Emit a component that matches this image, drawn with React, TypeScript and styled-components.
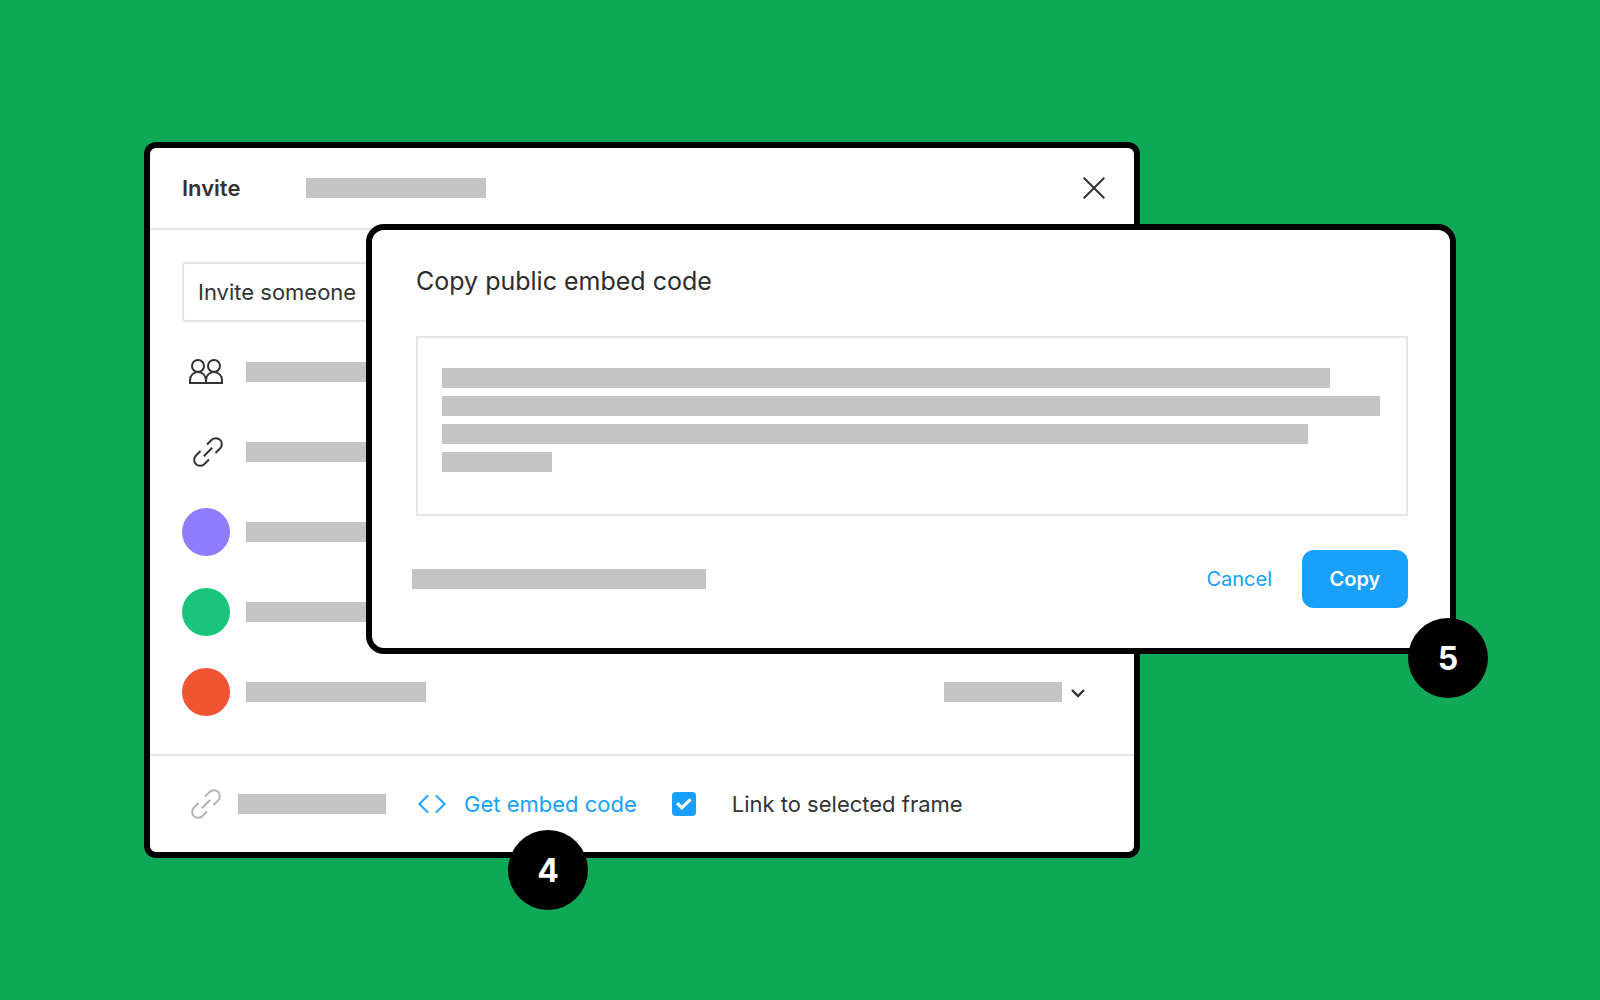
import React from "react";
import styled, { createGlobalStyle } from "styled-components";

const GlobalStyle = createGlobalStyle`
  *, *::before, *::after { box-sizing: border-box; }
  body { margin: 0; background: #0fa958; }
  body, button, input { font-family: Inter, "Liberation Sans", sans-serif; }
`;

const Stage = styled.main`
  min-height: 100vh;
  padding: 48px 144px;
  display: flex;
  align-items: center;
  color: #333;
  font-size: 22px;
  line-height: 28px;
`;

const Scene = styled.div`
  position: relative;
  flex: 1;
`;

const InviteWindow = styled.section`
  position: relative;
  margin-right: 316px;
  background: #fff;
  border: 6px solid #000;
  border-radius: 12px;
`;

const Header = styled.header`
  display: flex;
  align-items: center;
  height: 82px;
  padding: 0 24px 0 32px;
  border-bottom: 2px solid #e5e5e5;
`;

const Heading = styled.h1`
  margin: 0;
  width: 124px;
  font-size: 22px;
  line-height: 28px;
  font-weight: 600;
`;

const IconButton = styled.button`
  display: grid;
  place-items: center;
  padding: 0;
  border: 0;
  background: none;
  color: #333;
  cursor: pointer;
`;

const CloseButton = styled(IconButton)`
  width: 32px;
  height: 32px;
  margin-left: auto;
`;

const Bar = styled.span<{ $width: number }>`
  display: block;
  flex: none;
  width: ${(p) => p.$width}px;
  max-width: 100%;
  height: 20px;
  background: #c4c4c4;
`;

const Body = styled.div`
  padding: 32px 32px 22px;
`;

const InviteInput = styled.input`
  display: block;
  width: 100%;
  height: 60px;
  padding: 0 14px;
  border: 2px solid #e5e5e5;
  border-radius: 4px;
  outline: 0;
  font-size: 22px;
  line-height: 28px;
  color: #333;
  &::placeholder { color: #333; opacity: 1; }
`;

const People = styled.ul`
  margin: 10px 0 0;
  padding: 0;
  list-style: none;
`;

const Person = styled.li`
  display: flex;
  align-items: center;
  gap: 16px;
  height: 80px;
`;

const Avatar = styled.span<{ $color?: string }>`
  display: grid;
  place-items: center;
  width: 48px;
  height: 48px;
  border-radius: 50%;
  background: ${(p) => p.$color ?? "transparent"};
`;

const Role = styled.div`
  display: flex;
  align-items: center;
  gap: 4px;
  margin-left: auto;
  margin-right: 12px;
`;

const RoleButton = styled(IconButton)`
  width: 24px;
  height: 24px;
`;

const Footer = styled.footer`
  display: flex;
  align-items: center;
  height: 98px;
  padding: 0 32px;
  border-top: 2px solid #e5e5e5;
`;

const CopyLink = styled.div`
  display: flex;
  align-items: center;
  color: #b3b3b3;
  gap: 8px;
`;

const EmbedButton = styled.button`
  display: flex;
  align-items: center;
  gap: 16px;
  margin-left: 30px;
  padding: 0;
  border: 0;
  background: none;
  color: #18a0fb;
  font-size: 22px;
  line-height: 28px;
  white-space: nowrap;
  cursor: pointer;
`;

const FrameOption = styled.label`
  display: flex;
  align-items: center;
  gap: 36px;
  margin-left: 35px;
  white-space: nowrap;
`;

const CheckWrap = styled.span`
  display: grid;
  place-items: center;
  width: 24px;
  height: 24px;
  & > * { grid-area: 1 / 1; }
  svg { pointer-events: none; visibility: hidden; }
  input:checked + svg { visibility: visible; }
`;

const Checkbox = styled.input`
  appearance: none;
  width: 24px;
  height: 24px;
  margin: 0;
  border: 2px solid #18a0fb;
  border-radius: 4px;
  &:checked { background: #18a0fb; }
`;

const Dialog = styled.section`
  position: absolute;
  top: 82px;
  left: 222px;
  right: 0;
  padding: 35px 42px 40px 44px;
  background: #fff;
  border: 6px solid #000;
  border-radius: 18px;
`;

const DialogTitle = styled.h2`
  margin: 0 0 39px;
  font-size: 25px;
  line-height: 32px;
  font-weight: 400;
  color: #2c2c2c;
`;

const CodeBox = styled.div`
  display: flex;
  flex-direction: column;
  gap: 8px;
  height: 180px;
  padding: 30px 24px;
  border: 2px solid #e5e5e5;
`;

const Actions = styled.div`
  display: flex;
  align-items: center;
  gap: 30px;
  margin: 34px 0 0 -4px;
`;

const Button = styled.button<{ $primary?: boolean }>`
  height: 58px;
  width: ${(p) => (p.$primary ? "106px" : "auto")};
  padding: 0;
  margin-left: ${(p) => (p.$primary ? "0" : "auto")};
  border: 0;
  border-radius: 12px;
  background: ${(p) => (p.$primary ? "#18a0fb" : "transparent")};
  color: ${(p) => (p.$primary ? "#fff" : "#18a0fb")};
  font-size: 20px;
  line-height: 28px;
  font-weight: ${(p) => (p.$primary ? 600 : 400)};
  cursor: pointer;
`;

const Step = styled.span<{ $left?: number; $right?: number; $bottom: number }>`
  position: absolute;
  bottom: ${(p) => p.$bottom}px;
  ${(p) => (p.$left !== undefined ? `left: ${p.$left}px;` : `right: ${p.$right}px;`)}
  display: grid;
  place-items: center;
  width: 80px;
  height: 80px;
  padding-top: 2px;
  border-radius: 50%;
  background: #000;
  color: #fff;
  font-size: 32px;
  line-height: 40px;
  font-weight: 700;
`;

const LinkIcon = ({ viewBox = "-2 0 36 32" }: { viewBox?: string }) => (
  <svg width="36" height="32" viewBox={viewBox} fill="none" stroke="currentColor" strokeWidth="2" aria-hidden="true">
    <path d="M15 8.5 19.76 3.76a6 6 0 0 1 8.48 8.48L23.5 17" />
    <path d="M8.5 15 3.76 19.76a6 6 0 0 0 8.48 8.48L17 23.5" />
    <path d="m11.8 20.2 8.4-8.4" />
  </svg>
);

const GroupIcon = () => (
  <svg width="36" height="28" viewBox="0 0 36 28" fill="none" stroke="currentColor" strokeWidth="2" aria-hidden="true">
    <circle cx="10" cy="8" r="6" />
    <circle cx="26" cy="8" r="6" />
    <path d="M2 25v-3a8 8 0 0 1 16 0v3zM18 25v-3a8 8 0 0 1 16 0v3z" />
  </svg>
);

const people: { id: string; color?: string; icon?: React.ReactNode; role?: boolean }[] = [
  { id: "group", icon: <GroupIcon /> },
  { id: "link", icon: <LinkIcon viewBox="-4 0 36 32" /> },
  { id: "violet", color: "#907cff" },
  { id: "green", color: "#1bc47d" },
  { id: "red", color: "#f05533", role: true },
];

const codeLines = [888, 938, 866, 110];

export default function App() {
  return (
    <>
      <GlobalStyle />
      <Stage>
        <Scene>
          <InviteWindow>
            <Header>
              <Heading>Invite</Heading>
              <Bar $width={180} />
              <CloseButton aria-label="Close">
                <svg width="24" height="24" viewBox="0 0 24 24" fill="none" stroke="currentColor" strokeWidth="2" aria-hidden="true">
                  <path d="m1.7 1.7 20.6 20.6M22.3 1.7 1.7 22.3" />
                </svg>
              </CloseButton>
            </Header>
            <Body>
              <InviteInput aria-label="Invite someone" placeholder="Invite someone" />
              <People>
                {people.map((p) => (
                  <Person key={p.id}>
                    <Avatar $color={p.color}>{p.icon}</Avatar>
                    <Bar $width={180} />
                    {p.role && (
                      <Role>
                        <Bar $width={118} />
                        <RoleButton aria-label="Change role">
                          <svg width="16" height="16" viewBox="0 0 16 16" fill="none" stroke="currentColor" strokeWidth="2.4" aria-hidden="true">
                            <path d="m2 6 6 6 6-6" />
                          </svg>
                        </RoleButton>
                      </Role>
                    )}
                  </Person>
                ))}
              </People>
            </Body>
            <Footer>
              <CopyLink>
                <Avatar><LinkIcon /></Avatar>
                <Bar $width={148} />
              </CopyLink>
              <EmbedButton>
                <svg width="32" height="24" viewBox="0 0 32 24" fill="none" stroke="currentColor" strokeWidth="2" aria-hidden="true">
                  <path d="m12 3.4-8.6 8.6 8.6 8.6M20 3.4l8.6 8.6-8.6 8.6" />
                </svg>
                Get embed code
              </EmbedButton>
              <FrameOption>
                <CheckWrap>
                  <Checkbox type="checkbox" defaultChecked />
                  <svg width="24" height="24" viewBox="0 0 24 24" fill="none" stroke="#fff" strokeWidth="3.2" aria-hidden="true">
                    <path d="m5.2 11.2 4.6 4.6 8.8-8.4" />
                  </svg>
                </CheckWrap>
                Link to selected frame
              </FrameOption>
            </Footer>
            <Step $left={358} $bottom={-58}>4</Step>
          </InviteWindow>

          <Dialog>
            <DialogTitle>Copy public embed code</DialogTitle>
            <CodeBox>
              {codeLines.map((w) => (
                <Bar key={w} $width={w} />
              ))}
            </CodeBox>
            <Actions>
              <Bar $width={294} />
              <Button>Cancel</Button>
              <Button $primary>Copy</Button>
            </Actions>
            <Step $right={-38} $bottom={-50}>5</Step>
          </Dialog>
        </Scene>
      </Stage>
    </>
  );
}
